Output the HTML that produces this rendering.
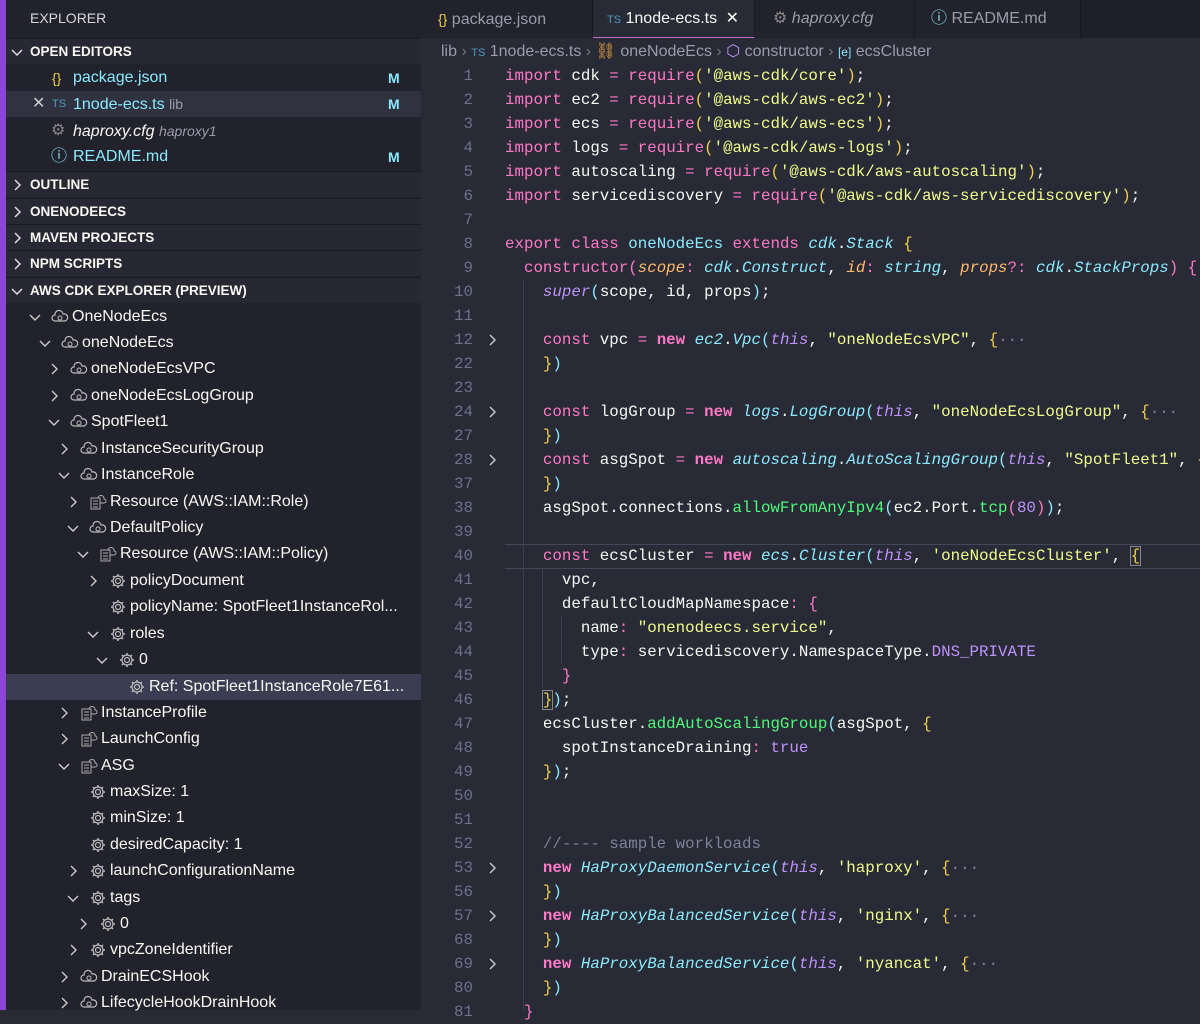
<!DOCTYPE html>
<html><head><meta charset="utf-8"><style>
*{margin:0;padding:0;box-sizing:border-box}
body{width:1200px;height:1010px;overflow:hidden;background:#282a36;font-family:"Liberation Sans",sans-serif;position:relative}
#side{position:absolute;left:0;top:0;width:421px;height:1010px;background:#21222c;border-left:6px solid #8c45d8}
.r{position:absolute;left:0;right:0;height:26px;line-height:26px;color:#f8f8f2;font-size:16px;white-space:nowrap}
.h{background:#272833;font-weight:bold;font-size:13.5px;border-top:1px solid #1a1b22}
.r span,.r svg{position:absolute}
.ch{top:6px}
#ed{position:absolute;left:421px;top:0;right:0;bottom:0}
#tabs{position:absolute;left:0;top:0;right:0;height:38px;background:#1e1f29}
.tab{position:absolute;top:0;height:38px;line-height:38px;font-size:16px;color:#9a9cab;background:#21222c;border-right:1px solid #191a21}
#crumb{position:absolute;top:38px;left:0;right:0;height:28px;line-height:28px;font-size:16px;color:#9a9cab;padding-left:20px}
.ln{position:absolute;left:0;width:52px;text-align:right;font-family:"Liberation Mono",monospace;font-size:15.8px;color:#6d7089}
.cd{position:absolute;left:84px;font-family:"Liberation Mono",monospace;font-size:15.8px;color:#f8f8f2;white-space:pre}
.k{color:#ff79c6}.kb{color:#ff79c6;font-weight:bold}.s{color:#f1fa8c}.c{color:#8be9fd;font-style:italic}.p{color:#ffb86c;font-style:italic}.t{color:#bd93f9;font-style:italic}.b{color:#f1d04a}.f{color:#50fa7b}.n{color:#bd93f9}.cm{color:#7e8299}.g{color:#8be9fd}
.fold{position:absolute;left:64px;color:#aaa;font-size:14px}
.guide{position:absolute;width:1px;background:#3c3f52}
</style></head><body>
<div id="side">
<div class="r" style="top:5px;font-size:14px;color:#d8d8d8"><span style="left:24px">EXPLORER</span></div>
<div class="r h" style="top:38px"><svg class="ch" style="left:4px" width="14" height="14"><polyline points="2,5 7,10 12,5" fill="none" stroke="#ddd" stroke-width="1.5"/></svg><span style="left:24px">OPEN EDITORS</span></div>
<div class="r" style="top:65px"><span style="left:46px;color:#f1d04a;font-size:14px">{}</span><span style="left:67px;color:#8be9fd">package.json</span><span style="left:382px;color:#8be9fd;font-weight:bold;font-size:14px">M</span></div>
<div class="r" style="top:91px;background:#30323f"><span style="left:26px;color:#ccc">✕</span><span style="left:46px;color:#519aba;font-size:11px">TS</span><span style="left:67px;color:#8be9fd">1node-ecs.ts <span style="position:static;color:#9a9cab;font-size:14px">lib</span></span><span style="left:382px;color:#8be9fd;font-weight:bold;font-size:14px">M</span></div>
<div class="r" style="top:118px"><span style="left:45px;color:#888">⚙</span><span style="left:67px;font-style:italic">haproxy.cfg <span style="position:static;color:#9a9cab;font-size:14px">haproxy1</span></span></div>
<div class="r" style="top:144px"><span style="left:45px;color:#8be9fd">ⓘ</span><span style="left:67px;color:#8be9fd">README.md</span><span style="left:382px;color:#8be9fd;font-weight:bold;font-size:14px">M</span></div>
<div class="r h" style="top:171px"><svg class="ch" style="left:4px" width="14" height="14"><polyline points="5,2 10,7 5,12" fill="none" stroke="#ddd" stroke-width="1.5"/></svg><span style="left:24px">OUTLINE</span></div>
<div class="r h" style="top:198px"><svg class="ch" style="left:4px" width="14" height="14"><polyline points="5,2 10,7 5,12" fill="none" stroke="#ddd" stroke-width="1.5"/></svg><span style="left:24px">ONENODEECS</span></div>
<div class="r h" style="top:224px"><svg class="ch" style="left:4px" width="14" height="14"><polyline points="5,2 10,7 5,12" fill="none" stroke="#ddd" stroke-width="1.5"/></svg><span style="left:24px">MAVEN PROJECTS</span></div>
<div class="r h" style="top:250px"><svg class="ch" style="left:4px" width="14" height="14"><polyline points="5,2 10,7 5,12" fill="none" stroke="#ddd" stroke-width="1.5"/></svg><span style="left:24px">NPM SCRIPTS</span></div>
<div class="r h" style="top:277px"><svg class="ch" style="left:4px" width="14" height="14"><polyline points="2,5 7,10 12,5" fill="none" stroke="#ddd" stroke-width="1.5"/></svg><span style="left:24px">AWS CDK EXPLORER (PREVIEW)</span></div>
<div id="tree"></div>
</div>
<div id="ed">
<div id="tabs">
<div class="tab" style="left:0;width:172px"><span style="margin-left:17px;color:#f1d04a;font-size:14px">{}</span> package.json</div>
<div class="tab" style="left:172px;width:162px;background:#282a36;color:#f8f8f2;border-bottom:1px solid #c06fc0"><span style="margin-left:14px;color:#519aba;font-size:11px">TS</span> 1node-ecs.ts <span style="margin-left:4px">✕</span></div>
<div class="tab" style="left:334px;width:160px;font-style:italic"><span style="margin-left:18px;color:#888;font-style:normal">⚙</span> haproxy.cfg</div>
<div class="tab" style="left:494px;width:166px"><span style="margin-left:16px;color:#8be9fd">ⓘ</span> README.md</div>
</div>
<div id="crumb">lib <span style="color:#777">›</span> <span style="color:#519aba;font-size:11px">TS</span> 1node-ecs.ts <span style="color:#777">›</span> <span style="color:#e6a23c">⛓</span> oneNodeEcs <span style="color:#777">›</span> <span style="color:#bd93f9">⬡</span> constructor <span style="color:#777">›</span> <span style="color:#8be9fd;font-size:12px">[e]</span> ecsCluster</div>
<div id="code"></div>
</div>
<script>
var chev='<svg width="14" height="14"><polyline points="5,2 10,7 5,12" fill="none" stroke="#ccc" stroke-width="1.4"/></svg>';
var chevd='<svg width="14" height="14"><polyline points="2,5 7,10 12,5" fill="none" stroke="#ccc" stroke-width="1.4"/></svg>';
var cloud='<svg width="18" height="18" viewBox="0 0 18 18"><path d="M4 13a3 3 0 0 1 0-6 4 4 0 0 1 8-1 3 3 0 0 1 2 7z" fill="none" stroke="#bbb" stroke-width="1.2"/><circle cx="9" cy="10" r="2" fill="none" stroke="#bbb"/></svg>';
var res='<svg width="18" height="18" viewBox="0 0 18 18"><rect x="2" y="5" width="9" height="11" fill="none" stroke="#aaa"/><path d="M4 8h5M4 11h5M4 14h5M9 5a3 3 0 0 1 6 1 2 2 0 0 1 0 4h-4" fill="none" stroke="#aaa"/></svg>';
var gear='<svg width="18" height="18" viewBox="0 0 18 18"><circle cx="9" cy="9" r="2.5" fill="none" stroke="#bbb" stroke-width="1.2"/><path d="M9 2v2M9 14v2M2 9h2M14 9h2M4 4l1.5 1.5M12.5 12.5L14 14M4 14l1.5-1.5M12.5 5.5L14 4" stroke="#bbb" stroke-width="1.5"/><circle cx="9" cy="9" r="5" fill="none" stroke="#bbb" stroke-width="1.2"/></svg>';
var T=[[304,'d',72,cloud,'OneNodeEcs'],[330,'d',82,cloud,'oneNodeEcs'],[356,'r',91,cloud,'oneNodeEcsVPC'],[383,'r',91,cloud,'oneNodeEcsLogGroup'],[409,'d',91,cloud,'SpotFleet1'],[436,'r',101,cloud,'InstanceSecurityGroup'],[462,'d',101,cloud,'InstanceRole'],[489,'r',110,res,'Resource (AWS::IAM::Role)'],[515,'d',110,cloud,'DefaultPolicy'],[541,'d',120,res,'Resource (AWS::IAM::Policy)'],[568,'r',130,gear,'policyDocument'],[594,'',130,gear,'policyName: SpotFleet1InstanceRol...'],[621,'d',130,gear,'roles'],[647,'d',139,gear,'0'],[674,'',149,gear,'Ref: SpotFleet1InstanceRole7E61...'],[700,'r',101,res,'InstanceProfile'],[726,'r',101,res,'LaunchConfig'],[753,'d',101,res,'ASG'],[779,'',110,gear,'maxSize: 1'],[805,'',110,gear,'minSize: 1'],[832,'',110,gear,'desiredCapacity: 1'],[858,'r',110,gear,'launchConfigurationName'],[885,'d',110,gear,'tags'],[911,'r',120,gear,'0'],[937,'r',110,gear,'vpcZoneIdentifier'],[964,'r',101,cloud,'DrainECSHook'],[990,'r',101,cloud,'LifecycleHookDrainHook']];
var h='';T.forEach(function(e){h+='<div class="r" style="top:'+e[0]+'px;'+(e[4].indexOf('Ref:')==0?'background:#3b3e52;':'')+'">'+(e[1]?'<span style="left:'+(e[2]-50)+'px;top:6px;line-height:0">'+(e[1]=='d'?chevd:chev)+'</span>':'')+'<span style="left:'+(e[2]-27)+'px;top:4px;line-height:0">'+e[3]+'</span><span style="left:'+(e[2]-6)+'px">'+e[4]+'</span></div>';});
document.getElementById('tree').innerHTML=h;
var L=[
[1,'<span class="k">import</span> cdk <span class="k">=</span> <span class="k">require</span><span class="b">(</span><span class="s">\'@aws-cdk/core\'</span><span class="b">)</span>;'],
[2,'<span class="k">import</span> ec2 <span class="k">=</span> <span class="k">require</span><span class="b">(</span><span class="s">\'@aws-cdk/aws-ec2\'</span><span class="b">)</span>;'],
[3,'<span class="k">import</span> ecs <span class="k">=</span> <span class="k">require</span><span class="b">(</span><span class="s">\'@aws-cdk/aws-ecs\'</span><span class="b">)</span>;'],
[4,'<span class="k">import</span> logs <span class="k">=</span> <span class="k">require</span><span class="b">(</span><span class="s">\'@aws-cdk/aws-logs\'</span><span class="b">)</span>;'],
[5,'<span class="k">import</span> autoscaling <span class="k">=</span> <span class="k">require</span><span class="b">(</span><span class="s">\'@aws-cdk/aws-autoscaling\'</span><span class="b">)</span>;'],
[6,'<span class="k">import</span> servicediscovery <span class="k">=</span> <span class="k">require</span><span class="b">(</span><span class="s">\'@aws-cdk/aws-servicediscovery\'</span><span class="b">)</span>;'],
[7,''],
[8,'<span class="k">export</span> <span class="k">class</span> <span class="g">oneNodeEcs</span> <span class="k">extends</span> <span class="c">cdk</span>.<span class="c">Stack</span> <span class="b">{</span>'],
[9,'  <span class="k">constructor</span><span class="k">(</span><span class="p">scope</span><span class="k">:</span> <span class="c">cdk</span>.<span class="c">Construct</span>, <span class="p">id</span><span class="k">:</span> <span class="c">string</span>, <span class="p">props</span><span class="k">?:</span> <span class="c">cdk</span>.<span class="c">StackProps</span><span class="k">)</span> <span class="k">{</span>'],
[10,'    <span class="t">super</span><span class="g">(</span>scope, id, props<span class="g">)</span>;'],
[11,''],
[12,'    <span class="k">const</span> vpc <span class="k">=</span> <span class="kb">new</span> <span class="c">ec2</span>.<span class="c">Vpc</span><span class="g">(</span><span class="t">this</span>, <span class="s">"oneNodeEcsVPC"</span>, <span class="b">{</span><span class="cm">···</span>',1],
[22,'    <span class="b">}</span><span class="g">)</span>'],
[23,''],
[24,'    <span class="k">const</span> logGroup <span class="k">=</span> <span class="kb">new</span> <span class="c">logs</span>.<span class="c">LogGroup</span><span class="g">(</span><span class="t">this</span>, <span class="s">"oneNodeEcsLogGroup"</span>, <span class="b">{</span><span class="cm">···</span>',1],
[27,'    <span class="b">}</span><span class="g">)</span>'],
[28,'    <span class="k">const</span> asgSpot <span class="k">=</span> <span class="kb">new</span> <span class="c">autoscaling</span>.<span class="c">AutoScalingGroup</span><span class="g">(</span><span class="t">this</span>, <span class="s">"SpotFleet1"</span>, <span class="b">{</span>',1],
[37,'    <span class="b">}</span><span class="g">)</span>'],
[38,'    asgSpot.connections.<span class="f">allowFromAnyIpv4</span><span class="g">(</span>ec2.Port.<span class="f">tcp</span><span class="k">(</span><span class="n">80</span><span class="k">)</span><span class="g">)</span>;'],
[39,''],
[40,'    <span class="k">const</span> ecsCluster <span class="k">=</span> <span class="kb">new</span> <span class="c">ecs</span>.<span class="c">Cluster</span><span class="g">(</span><span class="t">this</span>, <span class="s">\'oneNodeEcsCluster\'</span>, <span class="b" style="outline:1px solid #888">{</span>'],
[41,'      vpc,'],
[42,'      defaultCloudMapNamespace<span class="k">:</span> <span class="k">{</span>'],
[43,'        name<span class="k">:</span> <span class="s">"onenodeecs.service"</span>,'],
[44,'        type<span class="k">:</span> servicediscovery.NamespaceType.<span class="n">DNS_PRIVATE</span>'],
[45,'      <span class="k">}</span>'],
[46,'    <span class="b" style="outline:1px solid #888">}</span><span class="g">)</span>;'],
[47,'    ecsCluster.<span class="f">addAutoScalingGroup</span><span class="g">(</span>asgSpot, <span class="b">{</span>'],
[48,'      spotInstanceDraining<span class="k">:</span> <span class="n">true</span>'],
[49,'    <span class="b">}</span><span class="g">)</span>;'],
[50,''],[51,''],
[52,'    <span class="cm">//---- sample workloads</span>'],
[53,'    <span class="kb">new</span> <span class="c">HaProxyDaemonService</span><span class="g">(</span><span class="t">this</span>, <span class="s">\'haproxy\'</span>, <span class="b">{</span><span class="cm">···</span>',1],
[56,'    <span class="b">}</span><span class="g">)</span>'],
[57,'    <span class="kb">new</span> <span class="c">HaProxyBalancedService</span><span class="g">(</span><span class="t">this</span>, <span class="s">\'nginx\'</span>, <span class="b">{</span><span class="cm">···</span>',1],
[68,'    <span class="b">}</span><span class="g">)</span>'],
[69,'    <span class="kb">new</span> <span class="c">HaProxyBalancedService</span><span class="g">(</span><span class="t">this</span>, <span class="s">\'nyancat\'</span>, <span class="b">{</span><span class="cm">···</span>',1],
[80,'    <span class="b">}</span><span class="g">)</span>'],
[81,'  <span class="k">}</span>']];
var c='<div style="position:absolute;left:84px;right:0;top:544px;height:25px;border-top:1px solid #44475a;border-bottom:1px solid #44475a"></div>';
c+='<div class="guide" style="left:102px;top:280px;height:730px"></div><div class="guide" style="left:121px;top:568px;height:120px"></div><div class="guide" style="left:140px;top:616px;height:48px"></div>';
L.forEach(function(l,i){var y=64+i*24;c+='<div class="ln" style="top:'+y+'px;line-height:24px">'+l[0]+'</div>'+(l[2]?'<div class="fold" style="top:'+(y+5)+'px">'+chev+'</div>':'')+'<div class="cd" style="top:'+y+'px;line-height:24px">'+l[1]+'</div>';});
document.getElementById('code').innerHTML=c;
</script>
</body></html>
